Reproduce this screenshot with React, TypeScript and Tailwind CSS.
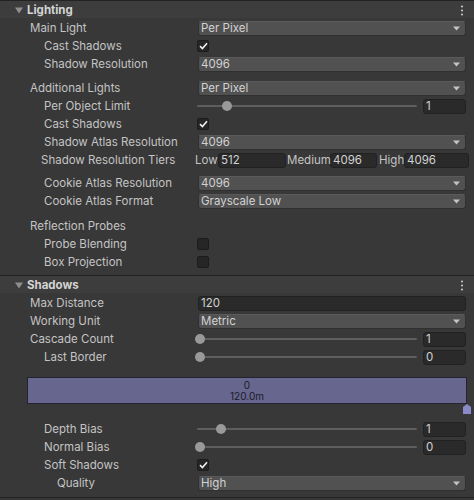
import React from "react";

const FONT = { fontFamily: "Inter, 'Noto Sans', sans-serif" };

function Header({ title }: { title: string }) {
  return (
    <div className="flex h-[17px] items-center bg-[#3d3d3d] pl-[15px] pr-[8px] pt-[1px]">
      <svg width="8" height="7" viewBox="0 0 8 7" className="mr-[4px]">
        <path d="M0 0.5 L8 0.5 L4 6.5 Z" fill="#8e8e8e" />
      </svg>
      <span className="relative top-[1px] flex-1 text-[11.5px] font-bold text-[#d4d4d4]">{title}</span>
      <svg width="4" height="11" viewBox="0 0 4 11" className="mr-[2px]">
        <circle cx="2" cy="1.5" r="1.1" fill="#c4c4c4" />
        <circle cx="2" cy="5.5" r="1.1" fill="#c4c4c4" />
        <circle cx="2" cy="9.5" r="1.1" fill="#c4c4c4" />
      </svg>
    </div>
  );
}

function Row({
  label,
  indent,
  labelW = 198,
  children,
}: {
  label: string;
  indent: number;
  labelW?: number;
  children?: React.ReactNode;
}) {
  return (
    <div className="flex h-[18px] items-center pr-[8px] pt-[2px]">
      <div
        className="relative top-[1px] shrink-0 whitespace-nowrap text-[11.5px] text-[#c4c4c4]"
        style={{ width: labelW, paddingLeft: indent }}
      >
        {label}
      </div>
      <div className="flex min-w-0 flex-1 items-center">{children}</div>
    </div>
  );
}

function Dropdown({ value }: { value: string }) {
  return (
    <div className="flex h-[15px] flex-1 items-center rounded-[3px] border border-[#303030] border-t-[#5a5a5a] bg-[#515151] pl-[2px] pr-[5px]">
      <span className="relative top-[0.5px] flex-1 text-[11.5px] leading-none text-[#d2d2d2]">{value}</span>
      <svg width="7" height="5" viewBox="0 0 7 5">
        <path d="M0 0.5 L7 0.5 L3.5 4.5 Z" fill="#c4c4c4" />
      </svg>
    </div>
  );
}

function Field({ value, className = "flex-1" }: { value: string; className?: string }) {
  return (
    <div
      className={`flex h-[15px] items-center rounded-[3px] border border-[#212121] bg-[#2a2a2a] pl-[2px] pt-[1px] text-[11.5px] leading-none text-[#d2d2d2] ${className}`}
    >
      {value}
    </div>
  );
}

function Check({ checked }: { checked: boolean }) {
  return (
    <div className="ml-[-1px] flex h-[12px] w-[12px] items-center justify-center rounded-[2px] border border-[#1c1c1c] bg-[#262626]">
      {checked && (
        <svg width="9" height="8" viewBox="0 0 9 8">
          <path d="M1 4.2 L3.4 6.5 L8 1.2" stroke="#f0f0f0" strokeWidth="1.6" fill="none" />
        </svg>
      )}
    </div>
  );
}

function Slider({ frac, value }: { frac: number; value: string }) {
  const center = 3 + frac * 213;
  return (
    <>
      <div className="relative ml-[-1px] h-[12px] w-[220px]">
        <div className="absolute left-0 right-0 top-[5px] h-[2px] rounded-full bg-[#5e5e5e]" />
        <div
          className="absolute top-[1px] h-[10px] w-[10px] rounded-full bg-[#999999]"
          style={{ left: center - 5 }}
        />
      </div>
      <div className="ml-[6px] flex flex-1">
        <Field value={value} />
      </div>
    </>
  );
}

export default function App() {
  return (
    <div className="h-[500px] w-[474px] overflow-hidden bg-[#383838]" style={FONT}>
      <div className="h-[1px] bg-[#232323]" />
      <Header title="Lighting" />
      <Row label="Main Light" indent={30}>
        <Dropdown value="Per Pixel" />
      </Row>
      <Row label="Cast Shadows" indent={44}>
        <Check checked />
      </Row>
      <Row label="Shadow Resolution" indent={44}>
        <Dropdown value="4096" />
      </Row>
      <div className="h-[6px]" />
      <Row label="Additional Lights" indent={30}>
        <Dropdown value="Per Pixel" />
      </Row>
      <Row label="Per Object Limit" indent={44}>
        <Slider frac={0.125} value="1" />
      </Row>
      <Row label="Cast Shadows" indent={44}>
        <Check checked />
      </Row>
      <Row label="Shadow Atlas Resolution" indent={44}>
        <Dropdown value="4096" />
      </Row>
      <div className="flex h-[18px] items-center pt-[2px]">
        <div className="relative top-[1px] w-[195px] shrink-0 whitespace-nowrap pl-[41px] text-[11.5px] text-[#c4c4c4]">
          Shadow Resolution Tiers
        </div>
        <span className="relative top-[1px] w-[23px] shrink-0 whitespace-nowrap text-[11.5px] text-[#c4c4c4]">Low</span>
        <Field value="512" className="w-[68px] shrink-0" />
        <span className="relative top-[1px] ml-[1px] w-[43px] shrink-0 whitespace-nowrap text-[11.5px] text-[#c4c4c4]">Medium</span>
        <Field value="4096" className="w-[47px] shrink-0" />
        <span className="relative top-[1px] ml-[2px] w-[25px] shrink-0 whitespace-nowrap text-[11.5px] text-[#c4c4c4]">High</span>
        <Field value="4096" className="w-[65px] shrink-0" />
      </div>
      <div className="h-[5px]" />
      <Row label="Cookie Atlas Resolution" indent={44}>
        <Dropdown value="4096" />
      </Row>
      <Row label="Cookie Atlas Format" indent={44}>
        <Dropdown value="Grayscale Low" />
      </Row>
      <div className="h-[7px]" />
      <Row label="Reflection Probes" indent={30} />
      <Row label="Probe Blending" indent={44}>
        <Check checked={false} />
      </Row>
      <Row label="Box Projection" indent={44}>
        <Check checked={false} />
      </Row>
      <div className="h-[5px]" />
      <div className="h-[1px] bg-[#232323]" />
      <Header title="Shadows" />
      <Row label="Max Distance" indent={30}>
        <Field value="120" />
      </Row>
      <Row label="Working Unit" indent={30}>
        <Dropdown value="Metric" />
      </Row>
      <Row label="Cascade Count" indent={30}>
        <Slider frac={0} value="1" />
      </Row>
      <Row label="Last Border" indent={44}>
        <Slider frac={0} value="0" />
      </Row>
      <div className="h-[12px]" />
      <div className="ml-[27px] mr-[7px] flex h-[27px] flex-col items-center justify-center border border-[#222230] bg-[#67668e] text-[10px] leading-[11px] text-[#1a1a28]">
        <span>0</span>
        <span>120.0m</span>
      </div>
      <div className="flex h-[15px] justify-end pr-[3px]">
        <svg width="8" height="10" viewBox="0 0 8 10">
          <path d="M0 3 L4 0 L8 3 L8 10 L0 10 Z" fill="#8b8ac8" />
        </svg>
      </div>
      <Row label="Depth Bias" indent={44}>
        <Slider frac={0.1} value="1" />
      </Row>
      <Row label="Normal Bias" indent={44}>
        <Slider frac={0} value="0" />
      </Row>
      <Row label="Soft Shadows" indent={44}>
        <Check checked />
      </Row>
      <Row label="Quality" indent={57}>
        <Dropdown value="High" />
      </Row>
      <div className="h-[6px]" />
      <div className="h-[1px] bg-[#232323]" />
    </div>
  );
}
